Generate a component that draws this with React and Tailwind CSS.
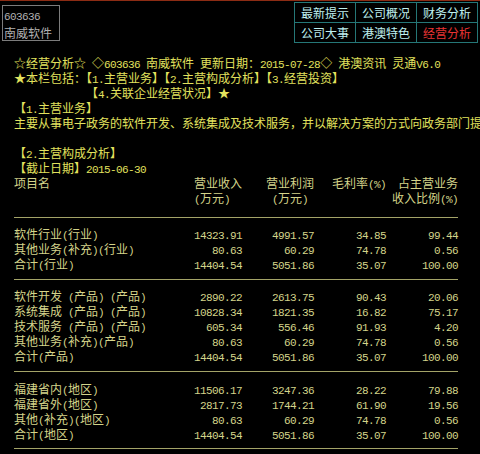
import React from "react";

const ASC = "font-['Liberation_Mono',monospace] text-[11px] tracking-[-0.6px]";
const CJK = "font-['Noto_Sans_CJK_SC',sans-serif] text-[12px]";

function Mx({ t }) {
  const parts = t.match(/[\x00-\x7f]+|[^\x00-\x7f]+/g) || [];
  return parts.map((s, i) =>
    /^[\x00-\x7f]/.test(s) ? (
      <span key={i} className={ASC}>{s}</span>
    ) : (
      <span key={i} className={CJK}>{s}</span>
    )
  );
}

function Line({ t, className = "" }) {
  return (
    <div className={"h-[15px] leading-[15px] whitespace-pre " + className}>
      <Mx t={t} />
    </div>
  );
}

const nav = [
  ["最新提示", false],
  ["公司概况", false],
  ["财务分析", false],
  ["公司大事", false],
  ["港澳特色", false],
  ["经营分析", true],
];

const g1 = [
  ["软件行业(行业)", "14323.91", "4991.57", "34.85", "99.44"],
  ["其他业务(补充)(行业)", "80.63", "60.29", "74.78", "0.56"],
  ["合计(行业)", "14404.54", "5051.86", "35.07", "100.00"],
];
const g2 = [
  ["软件开发 (产品) (产品)", "2890.22", "2613.75", "90.43", "20.06"],
  ["系统集成 (产品) (产品)", "10828.34", "1821.35", "16.82", "75.17"],
  ["技术服务 (产品) (产品)", "605.34", "556.46", "91.93", "4.20"],
  ["其他业务(补充)(产品)", "80.63", "60.29", "74.78", "0.56"],
  ["合计(产品)", "14404.54", "5051.86", "35.07", "100.00"],
];
const g3 = [
  ["福建省内(地区)", "11506.17", "3247.36", "28.22", "79.88"],
  ["福建省外(地区)", "2817.73", "1744.21", "61.90", "19.56"],
  ["其他(补充)(地区)", "80.63", "60.29", "74.78", "0.56"],
  ["合计(地区)", "14404.54", "5051.86", "35.07", "100.00"],
];

const COLS = "grid grid-cols-[156px_72px_72px_72px_72px]";

function Rows({ rows }) {
  return (
    <div>
      {rows.map((r, i) => (
        <div key={i} className={COLS + " h-[15px] leading-[15px] whitespace-pre"}>
          <div><Mx t={r[0]} /></div>
          {r.slice(1).map((v, j) => (
            <div key={j} className="text-right"><Mx t={v} /></div>
          ))}
        </div>
      ))}
    </div>
  );
}

export default function App() {
  return (
    <div className="w-[480px] h-[454px] bg-black overflow-hidden">
      <div className="h-px bg-[#8c2c14]" />
      <div className="flex justify-between h-[46px]">
        <div className="ml-[2px] mt-[4px] w-[58px] h-[36px] border border-[#7c7c7c] pl-[1px] text-[#b0b0b0]">
          <div className="mt-[1px] h-[14px] leading-[14px] whitespace-pre"><Mx t="603636" /></div>
          <div className="mt-[3px] h-[16px] leading-[16px] whitespace-pre"><Mx t="南威软件" /></div>
        </div>
        <div className="mr-[2px] mt-[1px] grid grid-cols-[61px_61px_61px] border-l border-t border-[#257777] self-start">
          {nav.map(([label, active], i) => (
            <div
              key={i}
              className={
                "h-[20px] border-r border-b border-[#257777] text-center leading-[19px] font-['Noto_Sans_CJK_SC',sans-serif] text-[12px] " +
                (active ? "text-[#e83434]" : "text-[#bff0f0]")
              }
            >
              {label}
            </div>
          ))}
        </div>
      </div>
      <div className="pl-[14px] pt-[8px] text-[#e2e25e]">
        <Line t="☆经营分析☆ ◇603636 南威软件 更新日期：2015-07-28◇ 港澳资讯 灵通V6.0" />
        <Line t="★本栏包括：【1.主营业务】【2.主营构成分析】【3.经营投资】" />
        <Line t="            【4.关联企业经营状况】★" />
        <Line t="【1.主营业务】" />
        <Line t="主要从事电子政务的软件开发、系统集成及技术服务，并以解决方案的方式向政务部门提供" />
        <div className="h-[15px]" />
        <Line t="【2.主营构成分析】" />
        <Line t="【截止日期】2015-06-30" />
        <div className="text-[#d4d48a]">
          <div className={COLS + " leading-[15px] whitespace-pre"}>
            <div><Mx t="项目名" /></div>
            <div className="flex justify-end">
              <div>
                <div><Mx t="营业收入" /></div>
                <div><Mx t="(万元)" /></div>
              </div>
            </div>
            <div className="flex justify-end">
              <div>
                <div><Mx t="营业利润" /></div>
                <div><Mx t=" (万元)" /></div>
              </div>
            </div>
            <div className="text-right"><Mx t="毛利率(%)" /></div>
            <div className="text-right">
              <div><Mx t="占主营业务" /></div>
              <div><Mx t="收入比例(%)" /></div>
            </div>
          </div>
          <div className="w-[444px] h-px bg-[#a4a468] mt-[9px] mb-[8px]" />
          <Rows rows={g1} />
          <div className="w-[444px] h-px bg-[#a4a468] mt-[8px] mb-[8px]" />
          <Rows rows={g2} />
          <div className="w-[444px] h-px bg-[#a4a468] mt-[8px] mb-[9px]" />
          <Rows rows={g3} />
          <div className="w-[444px] h-px bg-[#a4a468] mt-[7px]" />
        </div>
      </div>
    </div>
  );
}
